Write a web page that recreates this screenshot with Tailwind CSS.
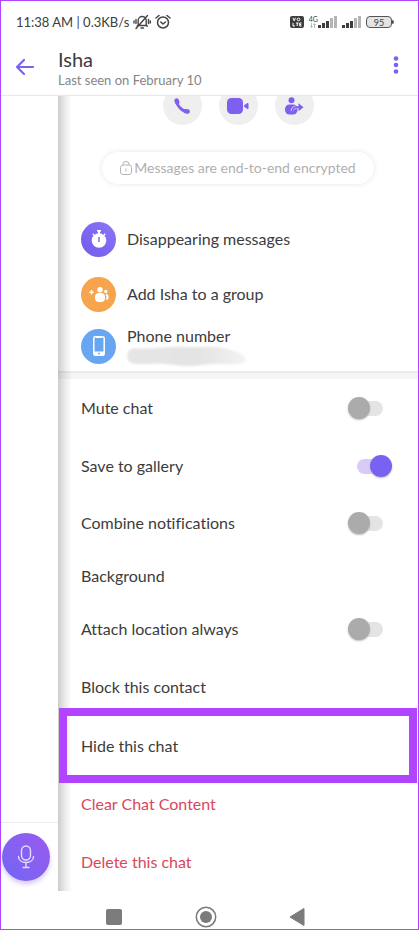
<!DOCTYPE html>
<html lang="en">
<head>
<meta charset="utf-8">
<meta name="viewport" content="width=device-width, initial-scale=1">
<title>Chat info</title>
<script src="https://cdn.jsdelivr.net/npm/@tailwindcss/browser@4"></script>
</head>
<body class="bg-white font-['Lato','Open_Sans',sans-serif] text-[#3c3c3c] [font-variant-ligatures:none]">
<div class="flex min-h-screen flex-col border border-[#b044ff] bg-white">

  <!-- Status bar -->
  <div class="flex h-[42px] items-center justify-between pr-6 pl-[15px]">
    <div class="flex items-center gap-1">
      <span class="text-[13px] leading-5">11:38 AM | 0.3KB/s</span>
      <svg class="h-4 w-[18px]" viewBox="0 0 18 16" fill="none" stroke="#444" stroke-width="1.4" stroke-linecap="round" aria-hidden="true">
        <path d="M5 11.5h9M5.2 11V6.500a4 4 0 0 1 8 0V11l1 1.200M4.200 12.200l1-1.200M8 14h2.500M3 14.500 14.500 1.500M1 7v2M3 5.500v4M15.500 5.500v4M17.300 7v2"/>
      </svg>
      <svg class="h-4 w-4" viewBox="0 0 16 16" fill="none" stroke="#444" stroke-width="1.500" stroke-linecap="round" stroke-linejoin="round" aria-hidden="true">
        <circle cx="8" cy="8.500" r="5.500"/><path d="m5.800 8 2.200 2 2.500-2M1 4l3-2.500M15 4l-3-2.500"/>
      </svg>
    </div>
    <div class="flex items-center gap-[5px]">
      <svg class="h-3 w-[14px]" viewBox="0 0 14 12" aria-hidden="true">
        <rect width="14" height="12" rx="2" fill="#3d3d3d"/>
        <path d="m3 1.800 1.200 3 1.200-3M3 7v3h2M6 7h2.500M7.200 7v3M11.500 7H9.700v3h1.800M9.700 8.500h1.500" fill="none" stroke="#fff"/>
        <ellipse cx="8.500" cy="3.400" rx="1.400" ry="1.300" fill="none" stroke="#fff"/>
      </svg>
      <div class="flex items-end">
        <div class="flex flex-col items-center text-[7px] leading-[7px]"><span>4G</span><svg class="h-[5px] w-[6px]" viewBox="0 0 6 5" fill="none" stroke="#aaa" stroke-width=".8" aria-hidden="true"><path d="M1.500 0v4M.3 3l1.200 1.500L2.700 3M4.500 5V1M3.300 2 4.500.5 5.700 2"/></svg></div>
        <svg class="h-3 w-[19px]" viewBox="0 0 19 12" aria-hidden="true"><path fill="#3d3d3d" d="M0 9h3v3H0zM4 7h3v5H4zM8 5h3v7H8z"/><path fill="#b5b5b5" d="M12 2h3v10h-3zM16 0h3v12h-3z"/></svg>
      </div>
      <svg class="h-3 w-[19px]" viewBox="0 0 19 12" aria-hidden="true"><path fill="#3d3d3d" d="M0 9h3v3H0zM4 7h3v5H4zM8 5h3v7H8z"/><path fill="#b5b5b5" d="M12 2h3v10h-3zM16 0h3v12h-3z"/></svg>
      <div class="flex items-center">
        <span class="flex h-3 w-[26px] items-center justify-center rounded-[4px] border border-[#555] bg-[#e4e4e4] text-[9px] leading-none">95</span>
        <span class="h-1 w-[2px] rounded-r bg-[#555]"></span>
      </div>
    </div>
  </div>

  <!-- Chat header -->
  <header class="flex h-[53px] items-center border-b border-[#e8e8e8] px-[14px]">
    <button type="button" aria-label="Back" class="flex w-[43px] items-center pb-1">
      <svg class="h-5 w-5" viewBox="0 0 20 20" fill="none" stroke="#7862f2" stroke-width="2.200" stroke-linecap="round" stroke-linejoin="round"><path d="M9 3 2 10l7 7M2 10h16"/></svg>
    </button>
    <div class="flex grow flex-col pb-[3px]">
      <h1 class="text-[20px] leading-6">Isha</h1>
      <p class="text-[13px] leading-[18px] text-[#858585]">Last seen on February 10</p>
    </div>
    <button type="button" aria-label="More options" class="flex w-4 justify-center pb-2">
      <svg class="h-5 w-4" viewBox="0 0 16 20" fill="#7862f2"><circle cx="8" cy="3.500" r="2.300"/><circle cx="8" cy="10" r="2.300"/><circle cx="8" cy="16.500" r="2.300"/></svg>
    </button>
  </header>

  <main class="flex grow overflow-hidden">
    <!-- Conversation behind the panel -->
    <div class="flex w-[57px] shrink-0 flex-col justify-end">
      <div class="border-t border-[#ededed] py-[10px] pl-px">
        <button type="button" aria-label="Record voice message" class="flex size-12 items-center justify-center rounded-full bg-linear-to-tr from-[#6f66f3] to-[#9b59ef] shadow-[0_3px_5px_#d9c8f7]">
          <svg class="h-6 w-5" viewBox="0 0 20 24" fill="none" stroke="#e4dcff" stroke-width="1.400" stroke-linecap="round"><rect x="5.500" y="1" width="9" height="14" rx="4.500"/><path d="M2.500 11.500c0 3.500 3 6 7.500 6s7.500-2.500 7.500-6M10 17.500V22M7 22.500h6"/></svg>
        </button>
      </div>
    </div>

    <!-- Chat info panel -->
    <div class="relative min-w-0 grow">
      <div class="pointer-events-none absolute inset-y-0 left-0 w-[14px] bg-linear-to-r from-black/20 via-black/8 to-transparent"></div>

      <div class="-mt-[10px] flex justify-center gap-[17px]">
        <button type="button" aria-label="Voice call" class="flex size-[39px] items-center justify-center rounded-full bg-[#efefef]">
          <svg class="size-[18px]" viewBox="0 0 18 18" fill="none" stroke="#7f5ff0" stroke-linecap="round"><path stroke-width="2.800" d="M3.300 3.500C4 9 9 14.200 14.500 14.700"/><path stroke-width="4.600" d="m3.600 3.600.6 1.700M12.700 14.200l1.900.3"/></svg>
        </button>
        <button type="button" aria-label="Video call" class="flex size-[39px] items-center justify-center rounded-full bg-[#efefef]">
          <svg class="h-4 w-[22px]" viewBox="0 0 22 16" fill="#7f5ff0"><rect x="0" y="0" width="16" height="16" rx="4.500"/><path d="M17.500 7 20 5.200c.8-.6 1.500 0 1.500.8v4c0 .8-.7 1.400-1.500.8L17.500 9c-.8-.6-.8-1.400 0-2z"/></svg>
        </button>
        <button type="button" aria-label="Share contact" class="flex size-[39px] items-center justify-center rounded-full bg-[#efefef]">
          <svg class="h-[18px] w-5" viewBox="0 0 20 18"><circle cx="7.500" cy="3.200" r="3" fill="#7f5ff0"/><rect x="1" y="7.500" width="12.500" height="10" rx="4.500" fill="#7f5ff0"/><path d="M8 14c.5-2.500 2-3.800 4.500-3.800" fill="none" stroke="#d5c9f5" stroke-width="3"/><path d="M8.500 14c.5-2.500 2-3.800 4-3.800h3" fill="none" stroke="#7f5ff0" stroke-width="1.800"/><path d="m14.500 6.200 5 4-5 4z" fill="#7f5ff0"/></svg>
        </button>
      </div>

      <div class="mt-[27px] flex justify-center">
        <p class="flex h-8 items-center gap-[2px] rounded-full px-[18px] text-[14px] leading-5 text-[#b0b0b0] shadow-[0_0_4px_1px_#ededed]">
          <svg class="h-[14px] w-3" viewBox="0 0 12 14" fill="none" stroke="#b5b5b5" aria-hidden="true"><rect x=".5" y="4" width="11" height="9.500" rx="2.500"/><path d="M3 4V3a3 2.500 0 0 1 6 0v1M6 7.500v3"/></svg>
          Messages are end-to-end encrypted
        </p>
      </div>

      <div class="mt-[27px] flex flex-col pl-[23px]">
        <button type="button" class="flex h-14 items-center gap-[11px] text-left text-[16px] leading-5">
          <span class="flex size-[35px] items-center justify-center rounded-full bg-linear-to-tr from-[#7259ee] to-[#8d76f7]">
            <svg class="h-[18px] w-4" viewBox="0 0 16 18" fill="#fff"><circle cx="8" cy="10.500" r="7.300"/><path d="M6 0h4v1.500H9V4H7V1.500H6zM2.300 3.200l1.200 1-1.200 1.300-1-1zM13.700 3.200l-1.200 1 1.200 1.300 1-1z"/><path d="M8 7v5" stroke="#7862f2" stroke-width="1.400"/></svg>
          </span>
          Disappearing messages
        </button>
        <button type="button" class="flex h-[54px] items-center gap-[11px] text-left text-[16px] leading-5">
          <span class="flex size-[35px] items-center justify-center rounded-full bg-[#f6a54e]">
            <svg class="h-[15px] w-5" viewBox="0 0 20 15" fill="#fff"><circle cx="11" cy="2.800" r="2.700"/><rect x="6" y="6" width="10" height="9" rx="4"/><circle cx="16.800" cy="4.500" r="1.700"/><path d="M16.500 7c2 0 3.200 1 3.200 3s-1 3-2.700 3c.7-2 .6-4-.5-6zM1.800 3h1.400v1.500h1.500v1.400H3.200v1.500H1.800V5.900H.3V4.500h1.500z"/></svg>
          </span>
          Add Isha to a group
        </button>
        <div class="flex h-[50px] items-center gap-[11px] text-[16px] leading-5">
          <span class="flex size-[35px] items-center justify-center rounded-full bg-[#69a6f2]">
            <svg class="h-5 w-3" viewBox="0 0 12 20"><rect x=".8" y=".8" width="10.400" height="18.400" rx="1.500" fill="none" stroke="#fff" stroke-width="1.500"/><path d="M1 15.500h10v3.700H1zM3 0h6v2H3z" fill="#fff"/><circle cx="6" cy="17.500" r=".9" fill="#69a6f2"/></svg>
          </span>
          <div class="flex flex-col">
            <span>Phone number</span>
            <svg class="h-5 w-[120px] blur-[1px]" viewBox="0 0 120 20" aria-hidden="true">
              <defs><linearGradient id="smudge"><stop offset="0" stop-color="#e6e6e6"/><stop offset=".6" stop-color="#e4e4e4"/><stop offset="1" stop-color="#f2f2f2"/></linearGradient></defs>
              <path fill="url(#smudge)" d="M7 2C25 4 40 0 58 1s30-2 42 2c10 2 20 6 18 12-3 5-18 3-27 3-12 0-18 2-32 2-15-1-21-3-34-2-11 0-22 1-24-4C-1 9 1 3 7 2z"/>
            </svg>
          </div>
        </div>
      </div>

      <div class="h-2 border-t-2 border-[#ebebeb] bg-[#f5f5f5]"></div>

      <div class="flex flex-col pr-[26px] pl-[23px] text-[16px] leading-5">
        <label class="flex h-[58px] items-center justify-between">Mute chat
          <input type="checkbox" class="relative h-[22px] w-11 appearance-none before:absolute before:top-1 before:right-[9px] before:left-[2px] before:h-[15px] before:rounded-full before:bg-[#e4e4e4] after:absolute after:left-0 after:size-[22px] after:rounded-full after:bg-[#ababab] after:shadow-[0_1px_2px_#bbb] checked:before:right-[2px] checked:before:left-[9px] checked:before:bg-[#d9caf6] checked:after:left-[22px] checked:after:bg-[#7862f2]">
        </label>
        <label class="flex h-[58px] items-center justify-between">Save to gallery
          <input type="checkbox" checked class="relative h-[22px] w-11 appearance-none before:absolute before:top-1 before:right-[9px] before:left-[2px] before:h-[15px] before:rounded-full before:bg-[#e4e4e4] after:absolute after:left-0 after:size-[22px] after:rounded-full after:bg-[#ababab] after:shadow-[0_1px_2px_#bbb] checked:before:right-[2px] checked:before:left-[9px] checked:before:bg-[#d9caf6] checked:after:left-[22px] checked:after:bg-[#7862f2]">
        </label>
        <label class="flex h-14 items-center justify-between">Combine notifications
          <input type="checkbox" class="relative h-[22px] w-11 appearance-none before:absolute before:top-1 before:right-[9px] before:left-[2px] before:h-[15px] before:rounded-full before:bg-[#e4e4e4] after:absolute after:left-0 after:size-[22px] after:rounded-full after:bg-[#ababab] after:shadow-[0_1px_2px_#bbb] checked:before:right-[2px] checked:before:left-[9px] checked:before:bg-[#d9caf6] checked:after:left-[22px] checked:after:bg-[#7862f2]">
        </label>
        <button type="button" class="h-[50px] text-left">Background</button>
        <label class="flex h-14 items-center justify-between">Attach location always
          <input type="checkbox" class="relative h-[22px] w-11 appearance-none before:absolute before:top-1 before:right-[9px] before:left-[2px] before:h-[15px] before:rounded-full before:bg-[#e4e4e4] after:absolute after:left-0 after:size-[22px] after:rounded-full after:bg-[#ababab] after:shadow-[0_1px_2px_#bbb] checked:before:right-[2px] checked:before:left-[9px] checked:before:bg-[#d9caf6] checked:after:left-[22px] checked:after:bg-[#7862f2]">
        </label>
        <button type="button" class="h-[60px] text-left">Block this contact</button>
        <div class="relative flex">
          <button type="button" class="h-[57px] grow text-left">Hide this chat</button>
          <div class="pointer-events-none absolute -top-[9px] -right-[25px] -bottom-[9px] -left-[22px] border-8 border-[#b044ff]"></div>
        </div>
        <button type="button" class="h-[59px] text-left text-[#d8485a]">Clear Chat Content</button>
        <button type="button" class="h-[58px] text-left text-[#d8485a]">Delete this chat</button>
      </div>
    </div>
  </main>

  <!-- System navigation -->
  <nav class="flex h-[38px] items-end justify-center gap-[70px] pr-2 pb-px">
    <button type="button" aria-label="Recent apps"><svg class="size-[22px]" viewBox="0 0 22 22"><rect x="3" y="3" width="16" height="16" rx="2" fill="#7b7b7b"/></svg></button>
    <button type="button" aria-label="Home"><svg class="size-[22px]" viewBox="0 0 22 22"><circle cx="11" cy="11" r="9.700" fill="none" stroke="#7b7b7b" stroke-width="1.500"/><circle cx="11" cy="11" r="6" fill="#7b7b7b"/></svg></button>
    <button type="button" aria-label="Back"><svg class="size-[22px]" viewBox="0 0 22 22"><path d="M17 2.500v17L3 11z" fill="#7b7b7b" stroke="#7b7b7b" stroke-linejoin="round"/></svg></button>
  </nav>
</div>
</body>
</html>
